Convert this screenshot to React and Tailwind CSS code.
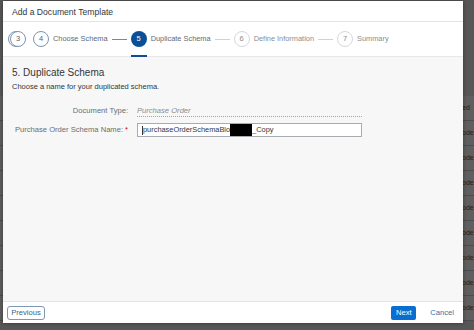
import React from "react";

const font = { fontFamily: '"Liberation Sans", Arial, sans-serif' };

function Circle({ n, variant }) {
  const base = "flex items-center justify-center rounded-full w-[16px] h-[16px] text-[7.5px] shrink-0";
  if (variant === "active")
    return <div className={`${base} bg-[#0b4f96] text-white`}>{n}</div>;
  if (variant === "done")
    return <div className={`${base} border border-[#7d93ad] bg-white text-[#4f5e6e]`}>{n}</div>;
  return <div className={`${base} border border-[#d5d8dc] bg-white text-[#8a8d90]`}>{n}</div>;
}

function Line({ light }) {
  return <div className={`w-[15px] h-px mx-[4px] ${light ? "bg-[#d0d3d6]" : "bg-[#7b8896]"}`} />;
}

const bgRows = ["ed", "ode", "ode", "ode", "ode", "ode", "ode", "ode", "ode"];

export default function App() {
  return (
    <div className="relative w-[474px] h-[330px] overflow-hidden bg-[#575757]" style={font}>
      {/* background page */}
      <div className="flex flex-col pt-[96px]">
        {bgRows.map((t, i) => (
          <div key={i} className="h-[25px] border-b border-[#4c4c4c] bg-[#5f5f5f] flex items-center pl-[462px] text-[7px] text-[#1e1e1e] whitespace-nowrap">
            {t}
          </div>
        ))}
      </div>

      {/* dialog */}
      <div className="absolute left-[3px] top-px w-[460px] h-[322px] bg-white flex flex-col shadow-[0_0_4px_rgba(0,0,0,0.4)]">
        <div className="h-[21px] shrink-0 flex items-center px-[9px] pt-[2px] text-[8.6px] text-[#32363a] border-b border-[#e4e4e4]">
          Add a Document Template
        </div>

        <div className="h-[35px] shrink-0 flex items-center pl-[5px] border-b border-[#e8e8e8] bg-white">
          <div className="relative w-[18px] h-[16px] shrink-0">
            <div className="absolute left-0 top-0 w-[16px] h-[16px] rounded-full border border-[#7d93ad] bg-white" />
            <div className="absolute left-[2px] top-0">
              <Circle n="3" variant="done" />
            </div>
          </div>
          <div className="ml-[7px]"><Circle n="4" variant="done" /></div>
          <span className="ml-[4px] text-[7.4px] text-[#5d6b7a]">Choose Schema</span>
          <Line />
          <div className="relative h-[35px] flex items-center">
            <Circle n="5" variant="active" />
            <div className="absolute left-0 bottom-0 w-[16px] h-[2px] bg-[#0b4f96]" />
          </div>
          <span className="ml-[4px] text-[7.4px] text-[#5d6b7a]">Duplicate Schema</span>
          <Line light />
          <div><Circle n="6" variant="todo" /></div>
          <span className="ml-[4px] text-[7.4px] text-[#8a8d90]">Define Information</span>
          <Line light />
          <div><Circle n="7" variant="todo" /></div>
          <span className="ml-[4px] text-[7.4px] text-[#8a8d90]">Summary</span>
        </div>

        <div className="flex-1 bg-[#f7f7f7] px-[9px] pt-[9px]">
          <div className="text-[10px] text-[#32363a] leading-[13px]">5. Duplicate Schema</div>
          <div className="text-[7.5px] text-[#32363a] mt-[3px] leading-[10px]">Choose a name for your duplicated schema.</div>

          <div className="mt-[13px] flex items-center h-[12px]">
            <div className="w-[116px] text-right text-[7.6px] text-[#6a6d70]">Document Type:</div>
            <div className="ml-[9px] w-[225px] h-[12px] border-b border-dotted border-[#a0a4a8] text-[7.6px] italic text-[#8a8d90] flex items-center">
              Purchase Order
            </div>
          </div>

          <div className="mt-[6px] flex items-center h-[14px]">
            <div className="w-[116px] text-right text-[7.6px] text-[#6a6d70]">
              Purchase Order Schema Name:<span className="text-[#d0001c] ml-[2px]">*</span>
            </div>
            <div className="ml-[9px] w-[225px] h-[14px] border border-[#a8acb0] bg-white flex items-center pl-[4px] text-[7.4px] text-[#32363a] whitespace-nowrap">
              <span className="w-px h-[9px] bg-[#32363a]" />
              <span>purchaseOrderSchemaBlo</span>
              <span className="inline-block w-[22px] h-[12px] bg-black" />
              <span>_Copy</span>
            </div>
          </div>
        </div>

        <div className="h-[22px] shrink-0 border-t border-[#e4e4e4] bg-white flex items-center justify-between pl-[4px] pr-[3px]">
          <div className="h-[14px] w-[38px] rounded-[3px] border border-[#7f97b3] flex items-center justify-center text-[7.6px] text-[#3e5f86]">
            Previous
          </div>
          <div className="flex items-center">
            <div className="h-[14px] w-[25px] rounded-[2px] bg-[#0a6ed1] flex items-center justify-center text-[7.6px] text-white">
              Next
            </div>
            <div className="h-[14px] px-[6px] ml-[8px] flex items-center text-[7.6px] text-[#3b6ea5]">Cancel</div>
          </div>
        </div>
      </div>
    </div>
  );
}
